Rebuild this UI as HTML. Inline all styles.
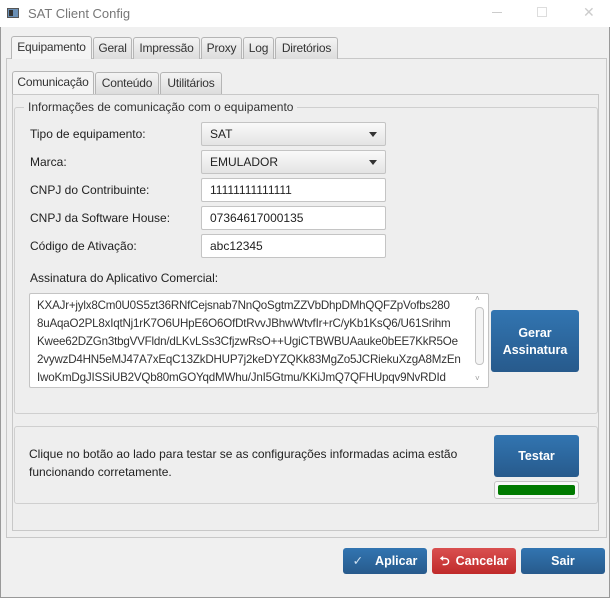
<!DOCTYPE html>
<html><head><meta charset="utf-8"><style>
*{box-sizing:border-box;margin:0;padding:0}
body{width:612px;height:599px;background:#fff;font-family:"Liberation Sans",sans-serif;font-size:12px;color:#222;position:relative;overflow:hidden}
.a{position:absolute}
#win{left:0;top:0;width:610px;height:598px;border:1px solid #999;border-top:none;background:#f0f0f0}
#title{left:0;top:0;width:610px;height:27px;background:#fff}
.tab{position:absolute;height:22px;border:1px solid #b5b5b5;border-bottom:none;background:linear-gradient(#f4f4f4,#dcdcdc);border-radius:3px 3px 0 0;text-align:center;line-height:20px;font-size:12px;color:#333;letter-spacing:-0.2px}
.tab.on{background:#f4f4f4;height:23px}
.pane{position:absolute;border:1px solid #c8c8c8;background:#eeeeee}
.box{position:absolute;border:1px solid #cfcfcf;border-radius:3px}
.lbl{position:absolute;left:30px;font-size:12px;color:#222}
.inp{position:absolute;left:201px;width:185px;height:24px;background:#fff;border:1px solid #c4c4c4;border-radius:2px;padding-left:8px;line-height:22px;font-size:12px}
.cmb{background:linear-gradient(#fafafa,#e4e4e4)}
.cmb:after{content:"";position:absolute;right:8px;top:9px;border:4.5px solid transparent;border-top:5px solid #333}
.btn{position:absolute;background:linear-gradient(#3275b1,#275a8c);color:#fff;font-weight:bold;text-align:center;border-radius:3px;font-size:12.5px}
</style></head><body>
<div id="win" class="a"></div>
<div id="title" class="a"></div>
<div class="a" style="left:7px;top:8px;width:12px;height:10px;background:#6a8fb5;border:1px solid #555"></div>
<div class="a" style="left:9px;top:10px;width:4px;height:6px;background:#333"></div>
<div class="a" style="left:28px;top:6px;font-size:13px;color:#777">SAT Client Config</div>
<div class="a" style="left:492px;top:12px;width:10px;height:1px;background:#ccc"></div>
<div class="a" style="left:537px;top:7px;width:10px;height:10px;border:1px solid #ddd"></div>
<div class="a" style="left:583px;top:4px;font-size:14px;color:#ccc">✕</div>

<div class="pane" style="left:6px;top:58px;width:601px;height:480px;background:#efefef"></div>
<div class="tab on" style="left:11px;top:36px;width:81px">Equipamento</div>
<div class="tab" style="left:93px;top:37px;width:39px">Geral</div>
<div class="tab" style="left:133px;top:37px;width:67px">Impressão</div>
<div class="tab" style="left:201px;top:37px;width:41px">Proxy</div>
<div class="tab" style="left:243px;top:37px;width:31px">Log</div>
<div class="tab" style="left:275px;top:37px;width:63px">Diretórios</div>

<div class="pane" style="left:12px;top:94px;width:587px;height:437px"></div>
<div class="tab on" style="left:12px;top:71px;width:82px">Comunicação</div>
<div class="tab" style="left:95px;top:72px;width:64px">Conteúdo</div>
<div class="tab" style="left:160px;top:72px;width:62px">Utilitários</div>

<div class="box" style="left:14px;top:107px;width:584px;height:307px"></div>
<div class="a" style="left:24px;top:100px;background:#eeeeee;padding:0 4px;font-size:12px;color:#333">Informações de comunicação com o equipamento</div>

<div class="lbl" style="top:127px">Tipo de equipamento:</div>
<div class="inp cmb" style="top:122px">SAT</div>
<div class="lbl" style="top:155px">Marca:</div>
<div class="inp cmb" style="top:150px">EMULADOR</div>
<div class="lbl" style="top:183px">CNPJ do Contribuinte:</div>
<div class="inp" style="top:178px">11111111111111</div>
<div class="lbl" style="top:211px">CNPJ da Software House:</div>
<div class="inp" style="top:206px">07364617000135</div>
<div class="lbl" style="top:239px">Código de Ativação:</div>
<div class="inp" style="top:234px">abc12345</div>
<div class="lbl" style="top:271px">Assinatura do Aplicativo Comercial:</div>

<div class="a" style="left:29px;top:293px;width:460px;height:95px;background:#fff;border:1px solid #c4c4c4;border-radius:2px"></div>
<div class="a" style="left:37px;top:297px;font-size:11.6px;line-height:18px;color:#333;white-space:pre;width:436px;overflow:hidden;letter-spacing:-0.2px">KXAJr+jylx8Cm0U0S5zt36RNfCejsnab7NnQoSgtmZZVbDhpDMhQQFZpVofbs280
8uAqaO2PL8xIqtNj1rK7O6UHpE6O6OfDtRvvJBhwWtvfIr+rC/yKb1KsQ6/U61Srihm
Kwee62DZGn3tbgVVFldn/dLKvLSs3CfjzwRsO++UgiCTBWBUAauke0bEE7KkR5Oe
2vywzD4HN5eMJ47A7xEqC13ZkDHUP7j2keDYZQKk83MgZo5JCRiekuXzgA8MzEn
IwoKmDgJISSiUB2VQb80mGOYqdMWhu/JnI5Gtmu/KKiJmQ7QFHUpqv9NvRDId</div>
<div class="a" style="left:475px;top:307px;width:9px;height:58px;border:1px solid #c4c4c4;border-radius:4px;background:#f4f4f4"></div>
<div class="a" style="left:475px;top:294px;font-size:8px;color:#999">˄</div>
<div class="a" style="left:475px;top:374px;font-size:8px;color:#999">˅</div>
<div class="btn" style="left:491px;top:310px;width:88px;height:62px;padding-top:15px;line-height:17px">Gerar<br>Assinatura</div>

<div class="box" style="left:14px;top:426px;width:584px;height:78px"></div>
<div class="a" style="left:29px;top:445px;font-size:12px;line-height:18px;color:#222">Clique no botão ao lado para testar se as configurações informadas acima estão<br>funcionando corretamente.</div>
<div class="btn" style="left:494px;top:435px;width:85px;height:42px;line-height:42px">Testar</div>
<div class="a" style="left:494px;top:481px;width:85px;height:18px;border:1px solid #c4c4c4;border-radius:3px;background:#f8f8f8;padding:3px"><div style="width:100%;height:100%;background:#007a00;border-radius:2px"></div></div>

<div class="btn" style="left:343px;top:548px;width:84px;height:26px;line-height:26px"><span style="font-weight:normal;color:#cfe0f0;margin-right:12px">✓</span>Aplicar</div>
<div class="btn" style="left:432px;top:548px;width:84px;height:26px;line-height:26px;background:linear-gradient(#d95050,#c02a2a)"><span style="margin-right:6px">⮌</span>Cancelar</div>
<div class="btn" style="left:521px;top:548px;width:84px;height:26px;line-height:26px">Sair</div>
</body></html>
